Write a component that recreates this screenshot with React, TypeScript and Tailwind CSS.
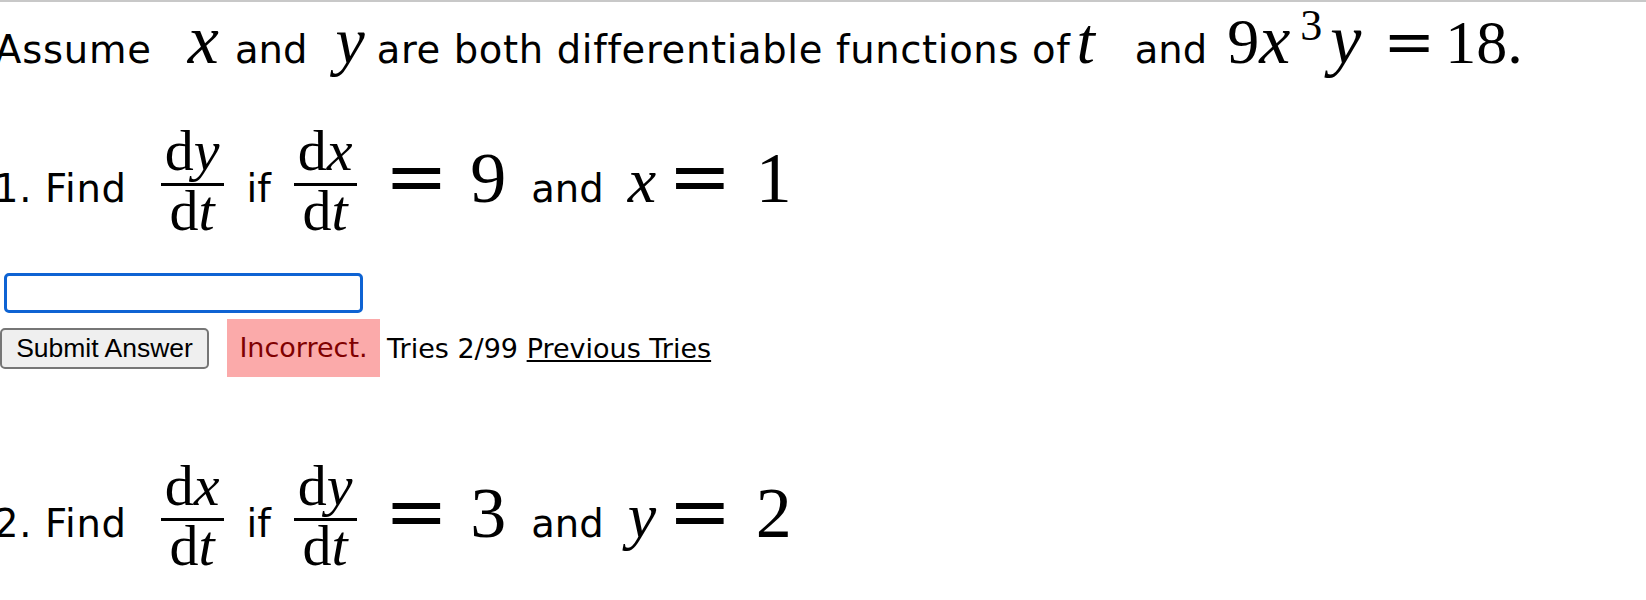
import React from 'react'

function Frac({ num, den }: { num: React.ReactNode; den: React.ReactNode }) {
  return (
    <span className="inline-flex flex-col align-[32px] font-['Liberation_Serif',serif] text-[58px]">
      <span className="px-[4px] text-center leading-[57px]">{num}</span>
      <span className="mt-[4px] h-[3px] bg-black" />
      <span className="mt-[3px] text-center leading-[44px]">{den}</span>
    </span>
  )
}

function Question({ n, top, bottom, val, v, rhs }: { n: string; top: string; bottom: string; val: string; v: string; rhs: string }) {
  return (
    <div className="-ml-[6px] whitespace-nowrap text-[38.5px] leading-none">
      <span className="tracking-[0.7px]">{n}. Find</span>
      <span className="ml-[34px]">
        <Frac num={<>d<i>{top}</i></>} den={<>d<i>t</i></>} />
      </span>
      <span className="ml-[23px]">if</span>
      <span className="ml-[23px]">
        <Frac num={<>d<i>{bottom}</i></>} den={<>d<i>t</i></>} />
      </span>
      <span className="ml-[28px] font-['DejaVu_Serif',serif] text-[76px]">=</span>
      <span className="ml-[22px] font-['Liberation_Serif',serif] text-[72px]">{val}</span>
      <span className="ml-[25px]">and</span>
      <span className="ml-[24px] font-['Liberation_Serif',serif] text-[64px] italic">{v}</span>
      <span className="ml-[12px] font-['DejaVu_Serif',serif] text-[76px]">=</span>
      <span className="ml-[24px] font-['Liberation_Serif',serif] text-[72px]">{rhs}</span>
    </div>
  )
}

export default function App() {
  return (
    <div className="h-[600px] w-[1646px] overflow-hidden border-t-2 border-[#c8c8c8] bg-white font-['DejaVu_Sans',sans-serif] text-black">
      {/* statement */}
      <div className="-ml-[5px] h-[98px] whitespace-nowrap text-[38.5px] leading-none">
        <span className="inline-block h-[61px]" />
        <span className="tracking-[0.8px]">Assume</span>
        <span className="ml-[36px] font-['Liberation_Serif',serif] text-[70px] italic">x</span>
        <span className="ml-[16px]">and</span>
        <span className="ml-[28px] font-['Liberation_Serif',serif] text-[66px] italic">y</span>
        <span className="ml-[12px] tracking-[0.65px]">are both differentiable functions of</span>
        <span className="ml-[6px] font-['Liberation_Serif',serif] text-[66px] italic">t</span>
        <span className="ml-[40px]">and</span>
        <span className="ml-[20px] font-['Liberation_Serif',serif] text-[64px]">
          9<i className="text-[70px]">x</i>
          <span className="ml-[10px] align-[23px] text-[44px] leading-none">3</span>
          <i className="ml-[8px] text-[70px]">y</i>
        </span>
        <span className="ml-[22px] font-['DejaVu_Serif',serif] text-[62px]">=</span>
        <span className="ml-[10px] font-['Liberation_Serif',serif] text-[62px]">18.</span>
      </div>

      <div className="mt-[22px]">
        <Question n="1" top="y" bottom="x" val="9" v="x" rhs="1" />
      </div>

      {/* answer box */}
      <div className="mt-[40px] pl-[4px]">
        <input
          type="text"
          aria-label="answer"
          className="block h-[40px] w-[359px] rounded-[5px] border-[3px] border-[#0e63d3] bg-white outline-none"
        />
      </div>

      <div className="mt-[6px] flex items-start whitespace-nowrap">
        <button className="mt-[9px] h-[41px] w-[209px] rounded-[5px] border-2 border-[#767676] bg-[#efefef] font-['Liberation_Sans',sans-serif] text-[26.5px] leading-none text-black">
          Submit Answer
        </button>
        <span className="ml-[18px] flex h-[58px] w-[153px] items-center justify-center bg-[#fbaaaa] text-[27px] text-[#800000]">
          Incorrect.
        </span>
        <span className="ml-[7px] self-center text-[27px] leading-none">
          Tries 2/99{' '}
          <a href="#" className="underline">
            Previous Tries
          </a>
        </span>
      </div>

      <div className="mt-[80px]">
        <Question n="2" top="x" bottom="y" val="3" v="y" rhs="2" />
      </div>
    </div>
  )
}
